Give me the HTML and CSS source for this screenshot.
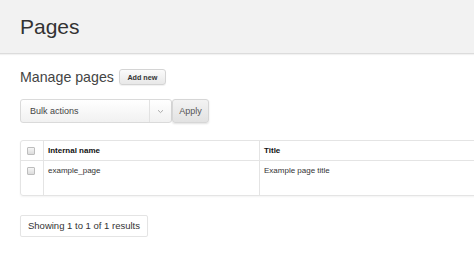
FILE: index.html
```html
<!DOCTYPE html>
<html lang="en">
<head>
  <meta charset="UTF-8" />
  <title>Pages</title>
  <meta name="viewport" content="width=device-width, initial-scale=1.0">
  <link rel="stylesheet" href="styles.css">
</head>
<body>
  <header class="page-header">
    <h1>Pages</h1>
  </header>

  <main class="content">
    <div class="title-row">
      <h2>Manage pages</h2>
      <button class="btn btn-small" type="button">Add new</button>
    </div>

    <form class="bulk-row">
      <div class="select">
        <span class="select-label">Bulk actions</span>
        <span class="select-caret">
          <svg width="7" height="5" viewBox="0 0 7 5"><path d="M1 1.2 L3.5 3.6 L6 1.2" fill="none" stroke="#aaa" stroke-width="1"/></svg>
        </span>
      </div>
      <button class="btn btn-apply" type="button">Apply</button>
    </form>

    <table class="pages-table">
      <thead>
        <tr>
          <th class="col-check"><span class="check"></span></th>
          <th class="col-name">Internal name</th>
          <th>Title</th>
        </tr>
      </thead>
      <tbody>
        <tr>
          <td class="col-check"><span class="check"></span></td>
          <td class="col-name">example_page</td>
          <td>Example page title</td>
        </tr>
      </tbody>
    </table>

    <div class="results">Showing 1 to 1 of 1 results</div>
  </main>
</body>
</html>
```

FILE: styles.css
```css
body {
  margin: 0;
  font-family: "Liberation Sans", Arial, sans-serif;
  color: #333;
  background: #fff;
  overflow: hidden;
}

.page-header {
  height: 53px;
  background: #f2f2f2;
  border-bottom: 1px solid #dcdcdc;
  box-shadow: 0 1px 1px rgba(0, 0, 0, 0.05);
  padding-left: 20px;
}

.page-header h1 {
  margin: 0;
  padding-top: 1px;
  font-size: 21px;
  font-weight: normal;
  line-height: 52px;
  color: #333;
}

.content {
  padding-left: 20px;
}

.title-row {
  display: flex;
  align-items: center;
  gap: 5px;
  margin-top: 15px;
  height: 16px;
}

.title-row h2 {
  margin: 0;
  font-size: 14.2px;
  font-weight: normal;
  line-height: 16px;
  color: #444;
}

.btn {
  font-family: inherit;
  color: #333;
  border: 1px solid #d4d4d4;
  border-radius: 3px;
  background: linear-gradient(#fbfbfb, #e8e8e8);
  box-shadow: 0 1px 1px rgba(0, 0, 0, 0.06);
  padding: 0;
  cursor: pointer;
}

.btn-small {
  width: 47px;
  height: 16px;
  font-size: 7.2px;
  font-weight: bold;
}

.bulk-row {
  display: flex;
  margin: 14px 0 0;
  height: 24px;
}

.select {
  display: flex;
  width: 152px;
  height: 24px;
  box-sizing: border-box;
  border: 1px solid #dadada;
  border-radius: 3px;
  background: linear-gradient(#ffffff, #f1f1f1);
}

.select-label {
  flex: 1;
  padding-left: 9px;
  font-size: 9px;
  line-height: 22px;
  color: #444;
}

.select-caret {
  width: 21px;
  border-left: 1px solid #e2e2e2;
  display: flex;
  align-items: center;
  justify-content: center;
}

.btn-apply {
  width: 37px;
  height: 24px;
  font-size: 9px;
  color: #555;
  background: linear-gradient(#f3f3f3, #e2e2e2);
  border-color: #d6d6d6;
  box-shadow: 0 1px 2px rgba(0, 0, 0, 0.12);
}

.pages-table {
  margin-top: 17px;
  width: 458px;
  border-collapse: separate;
  border-spacing: 0;
  border: 1px solid #e4e4e4;
  border-radius: 3px;
  box-shadow: 0 1px 2px rgba(0, 0, 0, 0.05);
  font-size: 8px;
  text-align: left;
}

.pages-table th {
  height: 19px;
  padding: 0 4px;
  border-bottom: 1px solid #e4e4e4;
  color: #111;
  font-weight: bold;
  vertical-align: middle;
}

.pages-table td {
  height: 28px;
  padding: 5px 4px 0;
  vertical-align: top;
  color: #333;
}

.pages-table .col-check {
  width: 11px;
  padding: 0 5px 0 6px;
  border-right: 1px solid #e4e4e4;
}

.pages-table td.col-check {
  padding-top: 6px;
}

.pages-table .col-name {
  width: 207px;
  border-right: 1px solid #e4e4e4;
}

.check {
  display: block;
  width: 6px;
  height: 6px;
  border: 1px solid #bdbdbd;
  border-radius: 1px;
  background: linear-gradient(#f6f6f6, #dcdcdc);
}

.results {
  display: inline-block;
  margin-top: 19px;
  height: 20px;
  padding: 0 7px;
  border: 1px solid #e4e4e4;
  border-radius: 2px;
  box-shadow: 0 1px 1px rgba(0, 0, 0, 0.04);
  font-size: 9.5px;
  line-height: 20px;
  color: #333;
}
```
